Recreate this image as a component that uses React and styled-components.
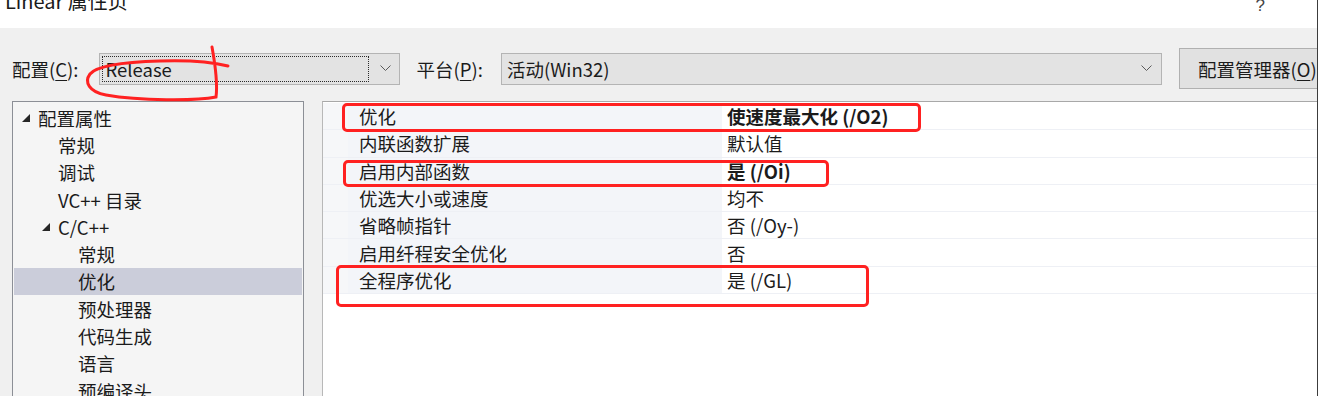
import styled, { createGlobalStyle } from "styled-components";

const GlobalStyle = createGlobalStyle`
  html, body {
    margin: 0;
    padding: 0;
    background: #ffffff;
  }
  body {
    font-family: "Noto Sans CJK SC", "Noto Sans", sans-serif;
    color: #1b1b1b;
  }
`;

const Window = styled.div`
  position: relative;
  width: 1317px;
  height: 396px;
  overflow: hidden;
  border-right: 1px solid #3c3c3c;
  background: #f0f0f0;
  display: flex;
  flex-direction: column;
`;

const TitleBar = styled.div`
  height: 28px;
  flex: none;
  background: #ffffff;
  display: flex;
  justify-content: space-between;
  align-items: flex-start;
  overflow: hidden;
  padding: 0 52px 0 5px;
`;

const Title = styled.div`
  font-size: 20px;
  line-height: 24px;
  margin-top: -11px;
  color: #1a1a1a;
`;

const Help = styled.div`
  font-family: "Liberation Sans", sans-serif;
  font-size: 17px;
  line-height: 20px;
  margin-top: -4px;
  color: #444;
`;

const Toolbar = styled.div`
  height: 41px;
  margin: 20px 0 12px;
  padding-left: 12px;
  display: flex;
  align-items: center;
  flex: none;
`;

const Label = styled.span`
  font-size: 18.5px;
  white-space: nowrap;
  margin-right: ${({ $gap }) => $gap}px;
  u {
    text-decoration: underline;
    text-underline-offset: 3px;
  }
`;

const Combo = styled.div`
  box-sizing: border-box;
  width: ${({ $w }) => $w}px;
  height: 32px;
  flex: none;
  border: 1px solid #b4b4b4;
  background: #e3e3e3;
  display: flex;
  align-items: stretch;
  margin-right: ${({ $gap }) => $gap || 0}px;
`;

const ComboText = styled.div`
  flex: 1;
  margin: 2px;
  padding-left: 2px;
  display: flex;
  align-items: center;
  font-size: 18.5px;
  border: 1px dotted ${({ $focus }) => ($focus ? "#2a2a2a" : "transparent")};
`;

const ComboArrow = styled.div`
  width: 28px;
  flex: none;
  display: flex;
  align-items: center;
  justify-content: center;
`;

const Button = styled.div`
  box-sizing: border-box;
  height: 41px;
  flex: none;
  padding: 0 10px 0 18px;
  border: 1px solid #b0b0b0;
  background: #e1e1e1;
  display: flex;
  align-items: center;
  font-size: 18.5px;
  white-space: nowrap;
  u {
    text-underline-offset: 3px;
  }
`;

const Body = styled.div`
  flex: 1;
  display: flex;
  gap: 18px;
  padding-left: 12px;
  min-height: 0;
`;

const Tree = styled.div`
  box-sizing: border-box;
  width: 292px;
  flex: none;
  border: 1px solid #8c8f96;
  border-bottom: none;
  background: #f5f5f5;
  padding: 2px 1px 0;
`;

const TreeItem = styled.div`
  height: 27.3px;
  display: flex;
  align-items: center;
  padding-left: ${({ $level }) => 8 + $level * 20}px;
  background: ${({ $selected }) => ($selected ? "#cbcdda" : "transparent")};
  font-size: 18.5px;
  white-space: nowrap;
`;

const Expander = styled.span`
  width: 16px;
  flex: none;
  display: flex;
  align-items: center;
`;

const Grid = styled.div`
  flex: 1;
  border-top: 1px solid #a8a8a8;
  border-left: 1px solid #b8b8b8;
  background: #ffffff;
  padding-top: 1px;
`;

const Row = styled.div`
  box-sizing: border-box;
  height: 27.3px;
  display: grid;
  grid-template-columns: 25px 374px 1fr;
  border-bottom: 1px solid #eef0f5;
  font-size: 18.5px;
`;

const Gutter = styled.div`
  background: #f6f7f9;
`;

const NameCell = styled.div`
  background: #f3f5f9;
  padding-left: 11px;
  display: flex;
  align-items: center;
  white-space: nowrap;
`;

const ValueCell = styled.div`
  padding-left: 5px;
  display: flex;
  align-items: center;
  white-space: nowrap;
  font-weight: ${({ $bold }) => ($bold ? 700 : 400)};
`;

const Mark = styled.div`
  position: absolute;
  box-sizing: border-box;
  left: ${({ $x }) => $x}px;
  top: ${({ $y }) => $y}px;
  width: ${({ $w }) => $w}px;
  height: ${({ $h }) => $h}px;
  border: 3px solid #ff2121;
  border-radius: 5px;
  pointer-events: none;
`;

const Scribble = styled.svg`
  position: absolute;
  left: 0;
  top: 0;
  pointer-events: none;
`;

const Chevron = () => (
  <svg width="11" height="7" viewBox="0 0 11 7">
    <polyline points="0.5,0.5 5.5,5.5 10.5,0.5" fill="none" stroke="#5a5a5a" strokeWidth="1" />
  </svg>
);

const Triangle = () => (
  <svg width="8" height="8" viewBox="0 0 8 8">
    <polygon points="8,0 8,8 0,8" fill="#262626" />
  </svg>
);

const tree = [
  { label: "配置属性", level: 0, open: true },
  { label: "常规", level: 1 },
  { label: "调试", level: 1 },
  { label: "VC++ 目录", level: 1 },
  { label: "C/C++", level: 1, open: true },
  { label: "常规", level: 2 },
  { label: "优化", level: 2, selected: true },
  { label: "预处理器", level: 2 },
  { label: "代码生成", level: 2 },
  { label: "语言", level: 2 },
  { label: "预编译头", level: 2 },
];

const props = [
  { name: "优化", value: "使速度最大化 (/O2)", bold: true },
  { name: "内联函数扩展", value: "默认值" },
  { name: "启用内部函数", value: "是 (/Oi)", bold: true },
  { name: "优选大小或速度", value: "均不" },
  { name: "省略帧指针", value: "否 (/Oy-)" },
  { name: "启用纤程安全优化", value: "否" },
  { name: "全程序优化", value: "是 (/GL)" },
];

const marks = [
  { x: 342, y: 103, w: 579, h: 29 },
  { x: 343, y: 160, w: 486, h: 27 },
  { x: 336, y: 265, w: 533, h: 42 },
];

export default function App() {
  return (
    <>
      <GlobalStyle />
      <Window>
        <TitleBar>
          <Title>Linear 属性页</Title>
          <Help>?</Help>
        </TitleBar>
        <Toolbar>
          <Label $gap={21}>
            配置(<u>C</u>):
          </Label>
          <Combo $w={301} $gap={16}>
            <ComboText $focus>Release</ComboText>
            <ComboArrow>
              <Chevron />
            </ComboArrow>
          </Combo>
          <Label $gap={18}>
            平台(<u>P</u>):
          </Label>
          <Combo $w={661} $gap={17}>
            <ComboText>活动(Win32)</ComboText>
            <ComboArrow>
              <Chevron />
            </ComboArrow>
          </Combo>
          <Button>
            配置管理器(<u>O</u>)
          </Button>
        </Toolbar>
        <Body>
          <Tree>
            {tree.map((item, i) => (
              <TreeItem key={i} $level={item.level} $selected={item.selected}>
                <Expander>{item.open && <Triangle />}</Expander>
                {item.label}
              </TreeItem>
            ))}
          </Tree>
          <Grid>
            {props.map((p, i) => (
              <Row key={i}>
                <Gutter />
                <NameCell>{p.name}</NameCell>
                <ValueCell $bold={p.bold}>{p.value}</ValueCell>
              </Row>
            ))}
          </Grid>
        </Body>

        {marks.map((m, i) => (
          <Mark key={i} $x={m.x} $y={m.y} $w={m.w} $h={m.h} />
        ))}
        <Scribble width="1317" height="396">
          <path
            d="M 212 47 C 214 58, 218 82, 216 97 C 196 101, 140 101, 106 95 C 89 92, 84 82, 90 74 C 97 65, 125 62, 160 61 C 190 60, 212 62, 228 66"
            fill="none"
            stroke="#ff2121"
            strokeWidth="3"
            strokeLinecap="round"
          />
        </Scribble>
      </Window>
    </>
  );
}
